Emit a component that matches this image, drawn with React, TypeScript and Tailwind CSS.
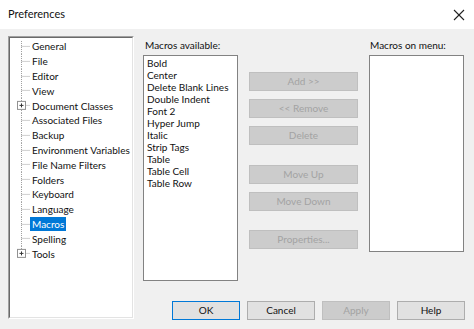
import React from "react";

const treeItems: { label: string; plus?: boolean; selected?: boolean }[] = [
  { label: "General" },
  { label: "File" },
  { label: "Editor" },
  { label: "View" },
  { label: "Document Classes", plus: true },
  { label: "Associated Files" },
  { label: "Backup" },
  { label: "Environment Variables" },
  { label: "File Name Filters" },
  { label: "Folders" },
  { label: "Keyboard" },
  { label: "Language" },
  { label: "Macros", selected: true },
  { label: "Spelling" },
  { label: "Tools", plus: true },
];

const macros = [
  "Bold",
  "Center",
  "Delete Blank Lines",
  "Double Indent",
  "Font 2",
  "Hyper Jump",
  "Italic",
  "Strip Tags",
  "Table",
  "Table Cell",
  "Table Row",
];

function Connector({ first, last, plus }: { first: boolean; last: boolean; plus?: boolean }) {
  const h = 14.8;
  const mid = h / 2;
  return (
    <svg width="17" height={h} viewBox={`0 0 17 ${h}`} className="shrink-0 block">
      <line
        x1="8.5"
        y1={first ? 2 : 0}
        x2="8.5"
        y2={last ? mid : h}
        stroke="#a0a0a0"
        strokeWidth="1"
        strokeDasharray="1 1"
      />
      <line x1="8.5" y1={mid} x2="17" y2={mid} stroke="#a0a0a0" strokeWidth="1" strokeDasharray="1 1" />
      {plus && (
        <g>
          <rect x="4.5" y={mid - 4} width="8" height="8" fill="#ffffff" stroke="#919191" strokeWidth="1" />
          <line x1="6.5" y1={mid} x2="10.5" y2={mid} stroke="#333" strokeWidth="1" />
          <line x1="8.5" y1={mid - 2} x2="8.5" y2={mid + 2} stroke="#333" strokeWidth="1" />
        </g>
      )}
    </svg>
  );
}

function DisabledButton({ children, className = "" }: { children: React.ReactNode; className?: string }) {
  return (
    <div
      className={`h-[19px] flex items-center justify-center bg-[#cccccc] border border-[#bfbfbf] text-[#a3a3a3] ${className}`}
    >
      {children}
    </div>
  );
}

export default function App() {
  return (
    <div
      className="w-[474px] h-[329px] flex flex-col text-[10px] text-[#111] overflow-hidden"
      style={{ fontFamily: "Lato, 'Noto Sans', sans-serif" }}
    >
      {/* Title bar */}
      <div className="h-[29px] bg-white flex items-center justify-between pl-2 pr-[9px] shrink-0">
        <span className="text-[11px] text-[#111]">Preferences</span>
        <svg width="12" height="12" viewBox="0 0 12 12" className="block">
          <line x1="1" y1="1" x2="11" y2="11" stroke="#222" strokeWidth="1.1" />
          <line x1="11" y1="1" x2="1" y2="11" stroke="#222" strokeWidth="1.1" />
        </svg>
      </div>

      {/* Body */}
      <div className="flex-1 bg-[#f0f0f0] flex pl-2 pt-[7px]">
        {/* Tree */}
        <div className="w-[126px] h-[283px] border-t border-l border-[#a0a0a0] border-r border-b border-r-white border-b-white shrink-0">
          <div className="w-full h-full bg-white border-t border-l border-[#696969] border-r border-b border-r-[#e3e3e3] border-b-[#e3e3e3] pl-[3px] pt-[1px]">
            {treeItems.map((item, i) => (
              <div key={item.label} className="flex items-center h-[14.8px]">
                <Connector first={i === 0} last={i === treeItems.length - 1} plus={item.plus} />
                <span
                  className={`px-[2px] leading-[14px] whitespace-nowrap ${
                    item.selected ? "bg-[#0078d7] text-white" : ""
                  }`}
                >
                  {item.label}
                </span>
              </div>
            ))}
          </div>
        </div>

        {/* Right area */}
        <div className="ml-[9px] flex flex-col">
          <div className="flex">
            {/* Macros available */}
            <div className="w-[95px] flex flex-col">
              <div className="h-[19px] flex items-center pl-[2px]">Macros available:</div>
              <div className="h-[226px] bg-white border border-[#828282] pl-[3px] pt-[1px]">
                {macros.map((m) => (
                  <div key={m} className="leading-[12px] whitespace-nowrap">
                    {m}
                  </div>
                ))}
              </div>
            </div>

            {/* Buttons */}
            <div className="ml-[11px] w-[109px] flex flex-col pt-[36px]">
              <DisabledButton>Add &gt;&gt;</DisabledButton>
              <DisabledButton className="mt-2">&lt;&lt; Remove</DisabledButton>
              <DisabledButton className="mt-2">Delete</DisabledButton>
              <DisabledButton className="mt-5">Move Up</DisabledButton>
              <DisabledButton className="mt-2">Move Down</DisabledButton>
              <DisabledButton className="mt-[19px]">Properties...</DisabledButton>
            </div>

            {/* Macros on menu */}
            <div className="ml-[11px] w-[95px] flex flex-col">
              <div className="h-[19px] flex items-center pl-[1px]">Macros on menu:</div>
              <div className="h-[197px] bg-white border border-[#828282]" />
            </div>
          </div>

          {/* Bottom buttons */}
          <div className="mt-[20px] flex justify-end gap-[7px] pl-[29px]">
            <div className="w-[68px] h-[19px] flex items-center justify-center bg-[#e1e1e1] border border-[#0078d7]">
              OK
            </div>
            <div className="w-[68px] h-[19px] flex items-center justify-center bg-[#e1e1e1] border border-[#adadad]">
              Cancel
            </div>
            <DisabledButton className="w-[68px]">Apply</DisabledButton>
            <div className="w-[68px] h-[19px] flex items-center justify-center bg-[#e1e1e1] border border-[#adadad]">
              Help
            </div>
          </div>
        </div>
      </div>
    </div>
  );
}
